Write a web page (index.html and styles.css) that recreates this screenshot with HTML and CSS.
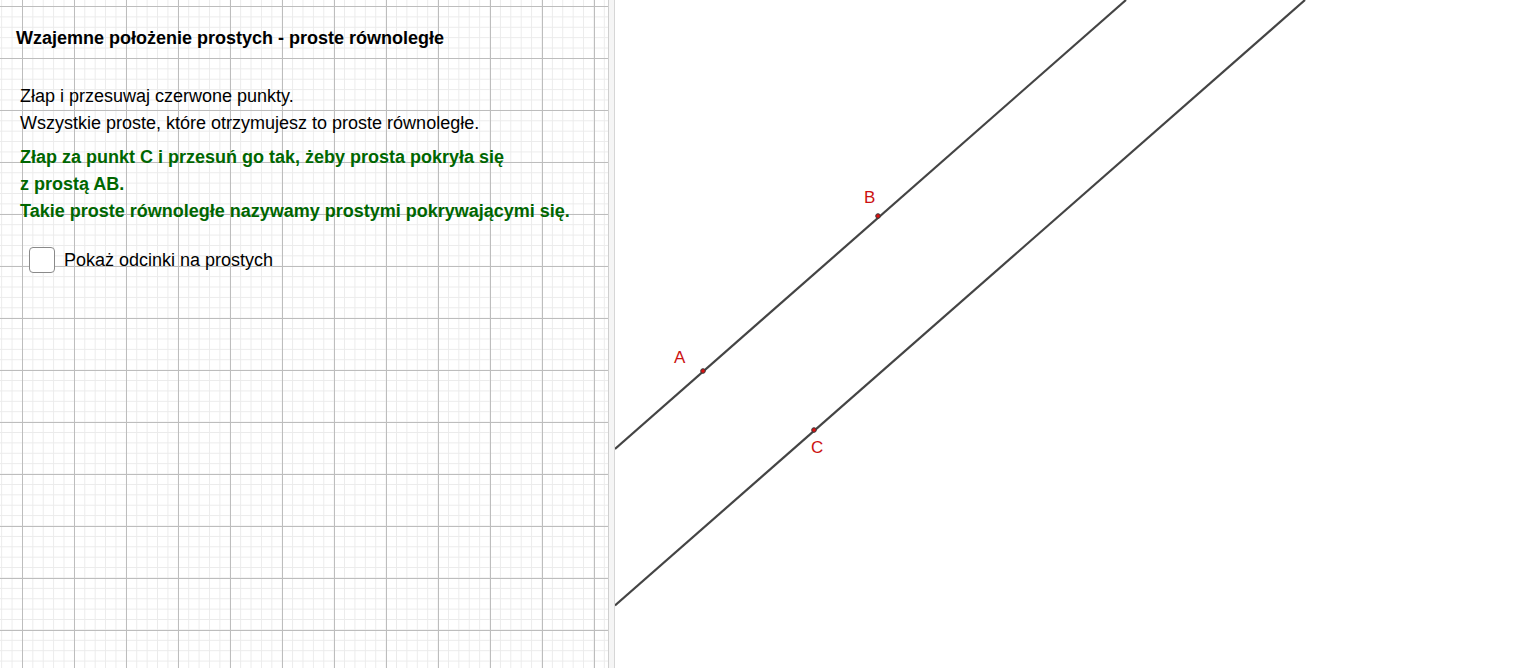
FILE: index.html
```html
<!DOCTYPE html>
<html lang="pl">
<head>
<meta charset="utf-8">
<title>Wzajemne położenie prostych - proste równoległe</title>
<link rel="stylesheet" href="styles.css">
</head>
<body>
<div class="app">
  <div class="panel">
    <h1 class="title">Wzajemne położenie prostych - proste równoległe</h1>
    <div class="text">
      <p class="line">Złap i przesuwaj czerwone punkty.</p>
      <p class="line">Wszystkie proste, które otrzymujesz to proste równoległe.</p>
    </div>
    <div class="text green">
      <p class="line">Złap za punkt C i przesuń go tak, żeby prosta pokryła się</p>
      <p class="line">z prostą AB.</p>
      <p class="line">Takie proste równoległe nazywamy prostymi pokrywającymi się.</p>
    </div>
    <label class="check">
      <span class="box"></span>
      <span class="check-label">Pokaż odcinki na prostych</span>
    </label>
  </div>
  <div class="divider"></div>
  <div class="canvas">
    <svg class="plot" width="921" height="668" viewBox="615 0 921 668">
      <line x1="615" y1="449" x2="1126" y2="0" class="ln"/>
      <line x1="615" y1="605.5" x2="1305" y2="0" class="ln"/>
      <circle cx="703" cy="371" r="2.3" class="pt"/>
      <circle cx="878" cy="216" r="2.3" class="pt"/>
      <circle cx="814" cy="430" r="2.3" class="pt"/>
      <text x="674" y="363" class="lbl">A</text>
      <text x="864" y="203" class="lbl">B</text>
      <text x="811" y="453" class="lbl">C</text>
    </svg>
  </div>
</div>
</body>
</html>
```
FILE: styles.css
```css
html, body {
  margin: 0;
  padding: 0;
  background: #ffffff;
  overflow: hidden;
}
.app {
  display: flex;
  width: 1536px;
  height: 668px;
  font-family: "Liberation Sans", Arial, sans-serif;
}
.panel {
  width: 608px;
  height: 668px;
  flex: none;
  box-sizing: border-box;
  padding: 27px 0 0 16px;
  background-color: #ffffff;
  background-image:
    linear-gradient(to right, #bdbdbd 1px, transparent 1px),
    linear-gradient(to bottom, #bdbdbd 1px, transparent 1px),
    linear-gradient(to right, #ebebeb 1px, transparent 1px),
    linear-gradient(to bottom, #ebebeb 1px, transparent 1px);
  background-size: 52px 52px, 52px 52px, 10.4px 10.4px, 10.4px 10.4px;
  background-position: 22px 6px, 22px 6px, 1.2px 6px, 22px 6px;
}
.title {
  margin: 0;
  font-size: 18px;
  font-weight: bold;
  line-height: 22px;
  color: #000;
}
.text {
  margin: 0 0 0 4px;
  font-size: 18px;
  color: #000;
}
.text:first-of-type {
  margin-top: 33.5px;
}
.line {
  margin: 0;
  line-height: 27px;
}
.green {
  margin-top: 7px;
  color: #006600;
  font-weight: bold;
}
.check {
  display: flex;
  align-items: center;
  gap: 9px;
  margin: 22.5px 0 0 13px;
  font-size: 18px;
  color: #000;
}
.box {
  width: 26px;
  height: 26px;
  box-sizing: border-box;
  border: 1px solid #8a8a8a;
  border-radius: 4px;
  background: #fff;
}
.divider {
  width: 7px;
  height: 668px;
  flex: none;
  box-sizing: border-box;
  background: #f5f5f5;
  border-left: 1px solid #cfcfcf;
  border-right: 1px solid #d6d6d6;
}
.canvas {
  flex: 1;
  height: 668px;
  background: #fff;
}
.plot {
  display: block;
}
.ln {
  stroke: #444444;
  stroke-width: 2.2;
}
.pt {
  fill: #dd1111;
  stroke: #3a3a3a;
  stroke-width: 1;
}
.lbl {
  fill: #cc1111;
  font-family: "Liberation Sans", Arial, sans-serif;
  font-size: 17px;
}
```
